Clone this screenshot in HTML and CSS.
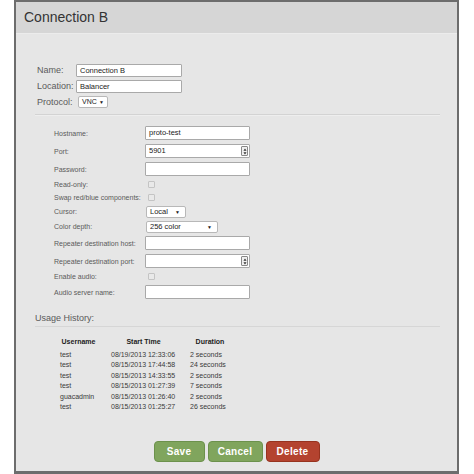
FILE: index.html
```html
<!DOCTYPE html>
<html>
<head>
<meta charset="utf-8">
<link rel="stylesheet" href="styles.css">
</head>
<body>
<div class="frame">
  <div class="header">Connection B</div>

  <div class="main">
    <div class="mrow"><span class="mlabel">Name:</span><span class="minput">Connection B</span></div>
    <div class="mrow"><span class="mlabel">Location:</span><span class="minput">Balancer</span></div>
    <div class="mrow"><span class="mlabel">Protocol:</span><span class="mselect">VNC <span class="arrow">▼</span></span></div>
  </div>

  <div class="sep"></div>

  <div class="params">
    <div class="prow tall"><span class="plabel">Hostname:</span><span class="pinput">proto-test</span></div>
    <div class="prow tall"><span class="plabel">Port:</span><span class="pinput spin">5901<span class="spinner"><svg width="5" height="9" viewBox="0 0 5 9"><path d="M2.5 0.5 L4.5 3.5 L0.5 3.5 Z M0.5 5.5 L4.5 5.5 L2.5 8.5 Z" fill="#333"/></svg></span></span></div>
    <div class="prow tall"><span class="plabel">Password:</span><span class="pinput"></span></div>
    <div class="prow short"><span class="plabel">Read-only:</span><span class="check"></span></div>
    <div class="prow short"><span class="plabel">Swap red/blue components:</span><span class="check"></span></div>
    <div class="prow mid"><span class="plabel">Cursor:</span><span class="pselect cursor">Local <span class="arrow">▼</span></span></div>
    <div class="prow mid"><span class="plabel">Color depth:</span><span class="pselect depth">256 color <span class="arrow">▼</span></span></div>
    <div class="prow tall"><span class="plabel">Repeater destination host:</span><span class="pinput"></span></div>
    <div class="prow tall"><span class="plabel">Repeater destination port:</span><span class="pinput spin"><span class="spinner"><svg width="5" height="9" viewBox="0 0 5 9"><path d="M2.5 0.5 L4.5 3.5 L0.5 3.5 Z M0.5 5.5 L4.5 5.5 L2.5 8.5 Z" fill="#333"/></svg></span></span></div>
    <div class="prow short"><span class="plabel">Enable audio:</span><span class="check"></span></div>
    <div class="prow tall"><span class="plabel">Audio server name:</span><span class="pinput"></span></div>
  </div>

  <div class="history-title">Usage History:</div>

  <div class="history">
    <div class="hrow head"><span class="c1">Username</span><span class="c2">Start Time</span><span class="c3">Duration</span></div>
    <div class="hrow"><span class="c1">test</span><span class="c2">08/19/2013 12:33:06</span><span class="c3">2 seconds</span></div>
    <div class="hrow"><span class="c1">test</span><span class="c2">08/15/2013 17:44:58</span><span class="c3">24 seconds</span></div>
    <div class="hrow"><span class="c1">test</span><span class="c2">08/15/2013 14:33:55</span><span class="c3">2 seconds</span></div>
    <div class="hrow"><span class="c1">test</span><span class="c2">08/15/2013 01:27:39</span><span class="c3">7 seconds</span></div>
    <div class="hrow"><span class="c1">guacadmin</span><span class="c2">08/15/2013 01:26:40</span><span class="c3">2 seconds</span></div>
    <div class="hrow"><span class="c1">test</span><span class="c2">08/15/2013 01:25:27</span><span class="c3">26 seconds</span></div>
  </div>

  <div class="buttons">
    <button class="btn save">Save</button>
    <button class="btn cancel">Cancel</button>
    <button class="btn delete">Delete</button>
  </div>
</div>
</body>
</html>
```
FILE: styles.css
```css
html, body {
  margin: 0;
  padding: 0;
  background: #ffffff;
  font-family: "Liberation Sans", Arial, sans-serif;
}

.frame {
  margin-left: 14px;
  width: 441px;
  height: 469px;
  border: 2px solid #6d6d6d;
  border-bottom-width: 3px;
  background: #e6e6e6;
  display: flex;
  flex-direction: column;
}

.header {
  height: 31px;
  line-height: 30px;
  background: #d6d6d6;
  border-bottom: 1px solid #ececec;
  padding-left: 8px;
  font-size: 14px;
  color: #333;
}

.main {
  padding-top: 28px;
  padding-left: 21px;
}

.mrow {
  display: flex;
  align-items: center;
  height: 16px;
}

.mlabel {
  width: 39px;
  font-size: 9px;
  color: #5a5a5a;
  white-space: nowrap;
}

.minput {
  box-sizing: border-box;
  width: 106px;
  height: 13px;
  line-height: 11px;
  background: #fff;
  border: 1px solid #a9a9a9;
  border-radius: 1px;
  padding-left: 3px;
  font-size: 7.5px;
  color: #222;
}

.mselect {
  box-sizing: border-box;
  margin-left: 2px;
  width: 30px;
  height: 12px;
  line-height: 10px;
  background: #fff;
  border: 1px solid #b8b8b8;
  border-radius: 2px;
  padding-left: 3px;
  font-size: 7px;
  color: #222;
  display: flex;
  justify-content: space-between;
  padding-right: 3px;
}

.arrow {
  font-size: 5px;
  line-height: 10px;
  color: #222;
}

.sep {
  margin: 4px 17px 0 19px;
  height: 1px;
  background: #d3d3d3;
  border-bottom: 1px solid #eeeeee;
}

.params {
  padding-top: 8px;
  padding-left: 38px;
}

.prow {
  display: flex;
  align-items: center;
}

.prow.tall { height: 18px; }
.prow.mid { height: 15px; }
.prow.short { height: 13px; }

.plabel {
  width: 91px;
  font-size: 7px;
  color: #5a5a5a;
  white-space: nowrap;
}

.pinput {
  box-sizing: border-box;
  width: 105px;
  height: 14px;
  line-height: 12px;
  background: #fff;
  border: 1px solid #a9a9a9;
  border-radius: 1px;
  padding-left: 3px;
  font-size: 7.5px;
  color: #222;
}

.pinput.spin {
  position: relative;
}

.spinner {
  position: absolute;
  right: 1px;
  top: 1px;
  width: 7px;
  height: 10px;
  box-sizing: border-box;
  border: 1px solid #888;
  border-radius: 1px;
  background: #f0f0f0;
  display: flex;
  align-items: center;
  justify-content: center;
}

.spinner svg {
  display: block;
  width: 4px;
  height: 7px;
}

.check {
  box-sizing: border-box;
  margin-left: 3px;
  width: 7px;
  height: 7px;
  border: 1px solid #c4c4c4;
  border-radius: 1px;
  background: #e9e9e9;
}

.pselect {
  box-sizing: border-box;
  margin-left: 1px;
  height: 12px;
  line-height: 10px;
  background: #fff;
  border: 1px solid #b8b8b8;
  border-radius: 2px;
  padding: 0 5px 0 3px;
  font-size: 7.5px;
  color: #222;
  display: flex;
  justify-content: space-between;
}

.pselect.cursor { width: 40px; }
.pselect.depth { width: 72px; }

.history-title {
  margin: 9px 17px 0 19px;
  height: 16px;
  line-height: 16px;
  font-size: 9px;
  color: #5a5a5a;
  border-bottom: 1px solid #d6d6d6;
}

.history {
  margin-top: 9px;
  padding-left: 44px;
}

.hrow {
  display: flex;
  height: 10.4px;
  line-height: 10.4px;
  font-size: 7px;
  color: #3a3a3a;
  white-space: nowrap;
}

.hrow.head {
  height: 12px;
  line-height: 12px;
  font-weight: bold;
  color: #222;
  margin-bottom: 2px;
}

.c1 { width: 37px; margin-right: 14px; }
.c2 { width: 65px; margin-right: 14px; }
.c3 { width: 40px; }

.hrow.head span { text-align: center; }

.buttons {
  margin-top: auto;
  padding-bottom: 9px;
  display: flex;
  justify-content: center;
  gap: 3px;
}

.btn {
  box-sizing: border-box;
  height: 21px;
  padding: 0;
  border-radius: 4px;
  font-family: "Liberation Sans", Arial, sans-serif;
  font-size: 10px;
  font-weight: bold;
  color: #fff;
  cursor: pointer;
  letter-spacing: 0.3px;
}

.btn.save {
  width: 51px;
  background: #80a55d;
  border: 1px solid #6c914c;
}

.btn.cancel {
  width: 55px;
  background: #80a55d;
  border: 1px solid #6c914c;
}

.btn.delete {
  width: 54px;
  background: #b4432f;
  border: 1px solid #97331f;
}
```
